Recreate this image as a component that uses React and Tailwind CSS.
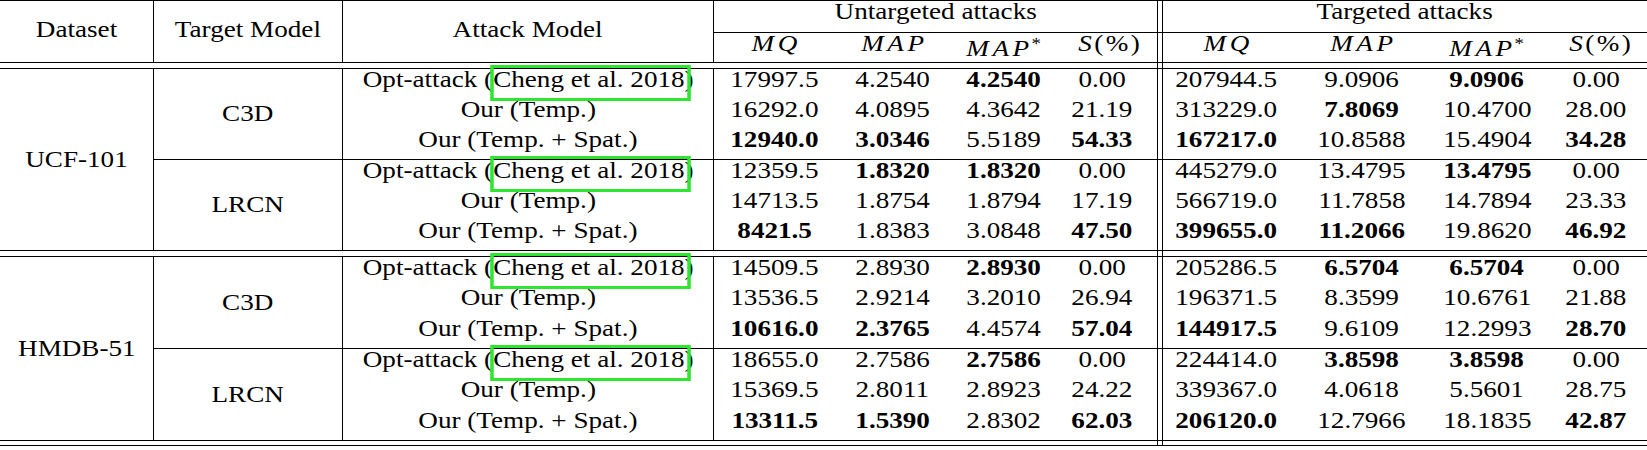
import React from "react";

const DATA = [
  {
    name: "UCF-101",
    heights: ["h-[91px] border-b border-black", "h-[90px]"],
    subs: [
      {
        model: "C3D",
        rows: [
          { a: "opt", u: [["17997.5"], ["4.2540"], ["4.2540", 1], ["0.00"]], t: [["207944.5"], ["9.0906"], ["9.0906", 1], ["0.00"]] },
          { a: "Our (Temp.)", u: [["16292.0"], ["4.0895"], ["4.3642"], ["21.19"]], t: [["313229.0"], ["7.8069", 1], ["10.4700"], ["28.00"]] },
          { a: "Our (Temp. + Spat.)", u: [["12940.0", 1], ["3.0346", 1], ["5.5189"], ["54.33", 1]], t: [["167217.0", 1], ["10.8588"], ["15.4904"], ["34.28", 1]] },
        ],
      },
      {
        model: "LRCN",
        rows: [
          { a: "opt", u: [["12359.5"], ["1.8320", 1], ["1.8320", 1], ["0.00"]], t: [["445279.0"], ["13.4795"], ["13.4795", 1], ["0.00"]] },
          { a: "Our (Temp.)", u: [["14713.5"], ["1.8754"], ["1.8794"], ["17.19"]], t: [["566719.0"], ["11.7858"], ["14.7894"], ["23.33"]] },
          { a: "Our (Temp. + Spat.)", u: [["8421.5", 1], ["1.8383"], ["3.0848"], ["47.50", 1]], t: [["399655.0", 1], ["11.2066", 1], ["19.8620"], ["46.92", 1]] },
        ],
      },
    ],
  },
  {
    name: "HMDB-51",
    heights: ["h-[92px] border-b border-black", "h-[91px]"],
    subs: [
      {
        model: "C3D",
        rows: [
          { a: "opt", u: [["14509.5"], ["2.8930"], ["2.8930", 1], ["0.00"]], t: [["205286.5"], ["6.5704", 1], ["6.5704", 1], ["0.00"]] },
          { a: "Our (Temp.)", u: [["13536.5"], ["2.9214"], ["3.2010"], ["26.94"]], t: [["196371.5"], ["8.3599"], ["10.6761"], ["21.88"]] },
          { a: "Our (Temp. + Spat.)", u: [["10616.0", 1], ["2.3765", 1], ["4.4574"], ["57.04", 1]], t: [["144917.5", 1], ["9.6109"], ["12.2993"], ["28.70", 1]] },
        ],
      },
      {
        model: "LRCN",
        rows: [
          { a: "opt", u: [["18655.0"], ["2.7586"], ["2.7586", 1], ["0.00"]], t: [["224414.0"], ["3.8598", 1], ["3.8598", 1], ["0.00"]] },
          { a: "Our (Temp.)", u: [["15369.5"], ["2.8011"], ["2.8923"], ["24.22"]], t: [["339367.0"], ["4.0618"], ["5.5601"], ["28.75"]] },
          { a: "Our (Temp. + Spat.)", u: [["13311.5", 1], ["1.5390", 1], ["2.8302"], ["62.03", 1]], t: [["206120.0", 1], ["12.7966"], ["18.1835"], ["42.87", 1]] },
        ],
      },
    ],
  },
];

const UW = [
  "w-[122px] shrink-0 border-l border-black text-center",
  "w-[115px] shrink-0 text-center",
  "w-[108px] shrink-0 text-center",
  "w-[99px] shrink-0 text-center pr-[11px]",
];
const TW = [
  "w-[126px] shrink-0 text-center",
  "w-[145px] shrink-0 text-center",
  "w-[106px] shrink-0 text-center",
  "w-[107px] shrink-0 text-center pl-[5px]",
];

function T({ children, b }) {
  return (
    <span className={b ? "inline-block scale-x-[1.18] font-bold whitespace-nowrap" : "inline-block scale-x-[1.18] whitespace-nowrap"}>
      {children}
    </span>
  );
}

function Spacer() {
  return <div className="w-[6px] shrink-0 border-x border-black" />;
}

function Opt() {
  return (
    <T>
      Opt-attack (
      <span className="relative inline-block">
        Cheng et al. 2018
        <span className="absolute -left-[2px] -right-[5px] -top-[4px] -bottom-[10px] border-[3px] border-[#2fe52f]" />
      </span>
      )
    </T>
  );
}

function Row({ row }) {
  return (
    <div className="flex-1 flex">
      <div className="w-[371px] shrink-0 border-l border-black text-center">
        {row.a === "opt" ? <Opt /> : <T>{row.a}</T>}
      </div>
      {row.u.map((c, i) => (
        <div key={i} className={UW[i]}>
          <T b={c[1]}>{c[0]}</T>
        </div>
      ))}
      <Spacer />
      {row.t.map((c, i) => (
        <div key={i} className={TW[i]}>
          <T b={c[1]}>{c[0]}</T>
        </div>
      ))}
    </div>
  );
}

function Group({ g }) {
  return (
    <div className="flex">
      <div className="w-[153px] shrink-0 flex items-center justify-center">
        <T>{g.name}</T>
      </div>
      <div className="flex-1 flex flex-col">
        {g.subs.map((s, i) => (
          <div key={i} className={"flex " + g.heights[i]}>
            <div className="w-[189px] shrink-0 border-l border-black flex items-center justify-center">
              <T>{s.model}</T>
            </div>
            <div className="flex-1 flex flex-col">
              {s.rows.map((r, j) => (
                <Row key={j} row={r} />
              ))}
            </div>
          </div>
        ))}
      </div>
    </div>
  );
}

function DoubleLine({ cls }) {
  return (
    <div className={cls}>
      <div className="w-[1157px] shrink-0" />
      <Spacer />
    </div>
  );
}

function MQ() {
  return (
    <T>
      <i className="tracking-[3px]">M</i>
      <i>Q</i>
    </T>
  );
}

function MAP({ star }) {
  return (
    <T>
      <i className="tracking-[3px]">MA</i>
      <i>P</i>
      {star ? <span className="text-[16px] align-[7px] ml-[2px]">*</span> : null}
    </T>
  );
}

function S() {
  return (
    <T>
      <i className="mr-[2px]">S</i>
      <span className="tracking-[2px]">(%</span>
      <span>)</span>
    </T>
  );
}

function Header() {
  return (
    <div className="flex h-[61px]">
      <div className="w-[153px] shrink-0 flex items-center justify-center pb-1">
        <T>Dataset</T>
      </div>
      <div className="w-[189px] shrink-0 border-l border-black flex items-center justify-center pb-1">
        <T>Target Model</T>
      </div>
      <div className="w-[371px] shrink-0 border-l border-black flex items-center justify-center pb-1">
        <T>Attack Model</T>
      </div>
      <div className="flex-1 flex flex-col">
        <div className="flex h-[32px] border-b border-black">
          <div className="w-[444px] shrink-0 border-l border-black text-center">
            <T>Untargeted attacks</T>
          </div>
          <Spacer />
          <div className="flex-1 text-center">
            <T>Targeted attacks</T>
          </div>
        </div>
        <div className="flex h-[29px]">
          <div className={UW[0]}>
            <MQ />
          </div>
          <div className={UW[1]}>
            <MAP />
          </div>
          <div className={UW[2]}>
            <MAP star />
          </div>
          <div className="w-[99px] shrink-0 text-center pl-[3px]">
            <S />
          </div>
          <Spacer />
          <div className={TW[0]}>
            <MQ />
          </div>
          <div className={TW[1]}>
            <MAP />
          </div>
          <div className={TW[2]}>
            <MAP star />
          </div>
          <div className="w-[107px] shrink-0 text-center pl-[13px]">
            <S />
          </div>
        </div>
      </div>
    </div>
  );
}

export default function App() {
  return (
    <div className="w-[1647px] h-[450px] bg-white text-black font-['Liberation_Serif',serif] text-[23px] leading-[22px] overflow-hidden">
      <div className="h-px bg-black" />
      <Header />
      <DoubleLine cls="flex h-[7px] border-y border-black" />
      <Group g={DATA[0]} />
      <DoubleLine cls="flex h-[7px] border-y border-black" />
      <Group g={DATA[1]} />
      <DoubleLine cls="flex h-[6px] border-y border-black" />
    </div>
  );
}
